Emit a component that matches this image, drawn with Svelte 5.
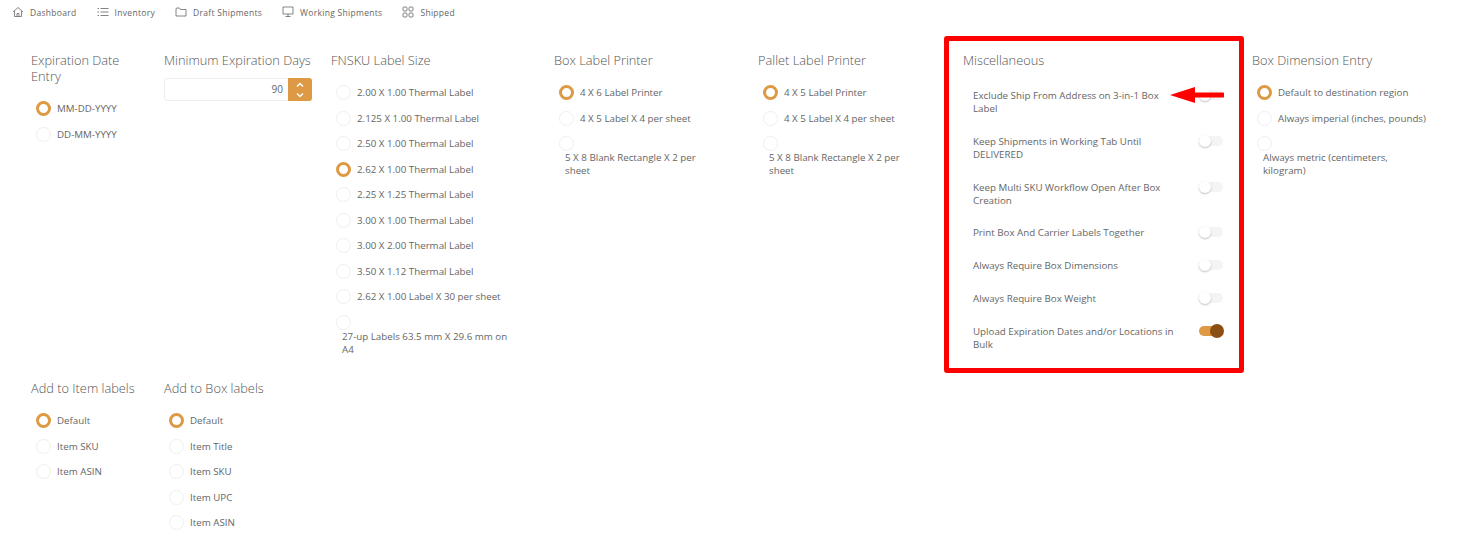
<script lang="ts">
  const nav = [
    { label: 'Dashboard', icon: 'home' },
    { label: 'Inventory', icon: 'list' },
    { label: 'Draft Shipments', icon: 'folder' },
    { label: 'Working Shipments', icon: 'monitor' },
    { label: 'Shipped', icon: 'grid' },
  ];

  const topGroups = [
    { key: 'expiry', title: 'Expiration Date Entry', selected: 0, options: ['MM-DD-YYYY', 'DD-MM-YYYY'] },
    { key: 'days', title: 'Minimum Expiration Days', selected: -1, options: [] },
    {
      key: 'fnsku',
      title: 'FNSKU Label Size',
      selected: 3,
      options: [
        '2.00 X 1.00 Thermal Label',
        '2.125 X 1.00 Thermal Label',
        '2.50 X 1.00 Thermal Label',
        '2.62 X 1.00 Thermal Label',
        '2.25 X 1.25 Thermal Label',
        '3.00 X 1.00 Thermal Label',
        '3.00 X 2.00 Thermal Label',
        '3.50 X 1.12 Thermal Label',
        '2.62 X 1.00 Label X 30 per sheet',
        '27-up Labels 63.5 mm X 29.6 mm on A4',
      ],
    },
    {
      key: 'box',
      title: 'Box Label Printer',
      selected: 0,
      options: ['4 X 6 Label Printer', '4 X 5 Label X 4 per sheet', '5 X 8 Blank Rectangle X 2 per sheet'],
    },
    {
      key: 'pallet',
      title: 'Pallet Label Printer',
      selected: 0,
      options: ['4 X 5 Label Printer', '4 X 5 Label X 4 per sheet', '5 X 8 Blank Rectangle X 2 per sheet'],
    },
  ];

  const dimension = {
    key: 'dimension',
    title: 'Box Dimension Entry',
    selected: 0,
    options: ['Default to destination region', 'Always imperial (inches, pounds)', 'Always metric (centimeters, kilogram)'],
  };

  const bottomGroups = [
    { key: 'item', title: 'Add to Item labels', selected: 0, options: ['Default', 'Item SKU', 'Item ASIN'] },
    { key: 'boxlabels', title: 'Add to Box labels', selected: 0, options: ['Default', 'Item Title', 'Item SKU', 'Item UPC', 'Item ASIN'] },
  ];

  let misc = $state([
    { label: 'Exclude Ship From Address on 3-in-1 Box Label', on: false },
    { label: 'Keep Shipments in Working Tab Until DELIVERED', on: false },
    { label: 'Keep Multi SKU Workflow Open After Box Creation', on: false },
    { label: 'Print Box And Carrier Labels Together', on: false },
    { label: 'Always Require Box Dimensions', on: false },
    { label: 'Always Require Box Weight', on: false },
    { label: 'Upload Expiration Dates and/or Locations in Bulk', on: true },
  ]);
</script>

{#snippet radioGroup(group)}
  <section class="group {group.key}">
    <h3>{group.title}</h3>
    {#each group.options as option, i}
      <div class="option">
        <span class="radio" class:checked={i === group.selected}></span>
        <span class="option-label">{option}</span>
      </div>
    {/each}
  </section>
{/snippet}

<nav class="topnav">
  {#each nav as item}
    <a class="nav-link" href="#top">
      <svg viewBox="0 0 12 12" width="12" height="12" fill="none" stroke="#666" stroke-width="0.8">
        {#if item.icon === 'home'}
          <path d="M1 6 6 1.500 11 6M2.500 5v5.500h7V5M5 10.500V7.500h2v3" />
        {:else if item.icon === 'list'}
          <path d="M3.500 2.500H11.500M3.500 6H11.500M3.500 9.500H11.500M.5 2.500H2M.5 6H2M.5 9.500H2" />
        {:else if item.icon === 'folder'}
          <path d="M1 3V10H11V3.500H5.500L4.500 2H1.500Z" />
        {:else if item.icon === 'monitor'}
          <path d="M1 1H11V8H1ZM6 8V10.500M3.500 10.500H8.500" />
        {:else}
          <rect x="1" y="1" width="4" height="4" rx="1" />
          <rect x="7" y="1" width="4" height="4" rx="1" />
          <rect x="1" y="7" width="4" height="4" rx="1" />
          <rect x="7" y="7" width="4" height="4" rx="1" />
        {/if}
      </svg>
      <span>{item.label}</span>
    </a>
  {/each}
</nav>

<main class="settings">
  <div class="row">
    {#each topGroups as group}
      {#if group.key === 'days'}
        <section class="group days">
          <h3>{group.title}</h3>
          <div class="spinner">
            <span class="spinner-value">90</span>
            <span class="spinner-btn">
              <svg viewBox="0 0 10 18" width="10" height="18" fill="none" stroke="#fff" stroke-width="1.5">
                <path d="M2 5.500 5 2.500 8 5.500M2 12.500 5 15.500 8 12.500" />
              </svg>
            </span>
          </div>
        </section>
      {:else}
        {@render radioGroup(group)}
      {/if}
    {/each}

    <section class="misc">
      <h3>Miscellaneous</h3>
      {#each misc as item}
        <div class="misc-row">
          <span class="misc-label">{item.label}</span>
          <button class="toggle" class:on={item.on} aria-label={item.label} onclick={() => (item.on = !item.on)}></button>
        </div>
      {/each}
      <svg class="arrow" viewBox="0 0 54 16" width="54" height="16">
        <path d="M0 8 25 0V5.500H52.500a2.500 2.500 0 0 1 0 5H25V16Z" fill="#f00" />
      </svg>
    </section>

    {@render radioGroup(dimension)}
  </div>

  <div class="row lower">
    {#each bottomGroups as group}
      {@render radioGroup(group)}
    {/each}
  </div>
</main>

<style>
  :global(body) {
    margin: 0;
    background: #fff;
    font-family: 'Open Sans', 'Liberation Sans', sans-serif;
    color: #666;
  }

  .topnav {
    display: flex;
    height: 24px;
    align-items: center;
    padding-left: 12px;
    gap: 20px;
  }

  .nav-link {
    display: flex;
    align-items: center;
    gap: 6px;
    font-size: 8.5px;
    letter-spacing: 0.3px;
    color: #666;
    text-decoration: none;
  }

  .row {
    display: flex;
    align-items: flex-start;
    padding-top: 12px;
  }

  .lower {
    padding-top: 0;
  }

  .group {
    box-sizing: border-box;
    padding-top: 16px;
  }

  .lower .group {
    padding-top: 7px;
  }

  .expiry { margin-left: 31px; width: 133px; padding-right: 30px; }
  .days { width: 167px; }
  .fnsku { width: 223px; }
  .box { width: 204px; }
  .pallet { width: 186px; }
  .dimension { margin-left: 8px; width: 180px; }
  .item { margin-left: 31px; width: 133px; }
  .boxlabels { width: 133px; }

  h3 {
    margin: 0 0 12px;
    font-size: 12.800px;
    line-height: 16px;
    font-weight: 300;
    color: #555;
  }

  .option {
    display: flex;
    flex-wrap: wrap;
    align-items: center;
    min-height: 25.500px;
    padding-left: 5px;
    font-size: 9.750px;
    line-height: 13px;
    color: #666;
  }

  .fnsku .option { width: 176px; }
  .box .option,
  .pallet .option { width: 150px; }
  .dimension .option { width: 172px; }

  .radio {
    box-sizing: border-box;
    width: 15px;
    height: 15px;
    margin: 5px 0;
    border: 1px solid #efefef;
    border-radius: 50%;
    background: #fff;
  }

  .radio.checked {
    border: 3.500px solid #dd9944;
  }

  .option-label {
    margin: -5px 0;
    padding-left: 6px;
  }

  .spinner {
    display: flex;
    width: 148px;
    height: 23px;
    margin-top: -2px;
    box-sizing: border-box;
    border: 1px solid #eee;
    border-radius: 3px;
    font-size: 10px;
  }

  .spinner-value {
    flex: 1;
    text-align: right;
    line-height: 21px;
    padding-right: 6px;
  }

  .spinner-btn {
    display: flex;
    align-items: center;
    justify-content: center;
    width: 24px;
    margin: -1px;
    background: #dd9944;
    border-radius: 0 3px 3px 0;
  }

  .misc {
    position: relative;
    box-sizing: border-box;
    width: 300px;
    height: 337px;
    padding: 11px 14px 0;
    border: 5px solid #f00;
    border-radius: 3px;
  }

  .misc h3 {
    margin-bottom: 21px;
  }

  .misc-row {
    display: flex;
    justify-content: space-between;
    align-items: flex-start;
    margin-bottom: 19.800px;
    padding-left: 10px;
    font-size: 9.750px;
    line-height: 13px;
  }

  .misc-label {
    width: 206px;
  }

  .toggle {
    position: relative;
    width: 24px;
    height: 10px;
    margin: 1px 2px 0 0;
    padding: 0;
    border: 0;
    border-radius: 5px;
    background: #f4f4f4;
  }

  .toggle::after {
    content: '';
    position: absolute;
    left: 0;
    top: -1px;
    width: 12px;
    height: 12px;
    border-radius: 50%;
    background: #fff;
    box-shadow: 0 1px 2px rgba(0, 0, 0, 0.25);
  }

  .toggle.on {
    background: #dd9944;
    width: 22px;
    margin-right: 4px;
  }

  .toggle.on::after {
    left: 11px;
    top: -2px;
    width: 14px;
    height: 14px;
    background: #8b4f14;
    box-shadow: none;
  }

  .arrow {
    position: absolute;
    left: 221px;
    top: 46px;
  }
</style>
